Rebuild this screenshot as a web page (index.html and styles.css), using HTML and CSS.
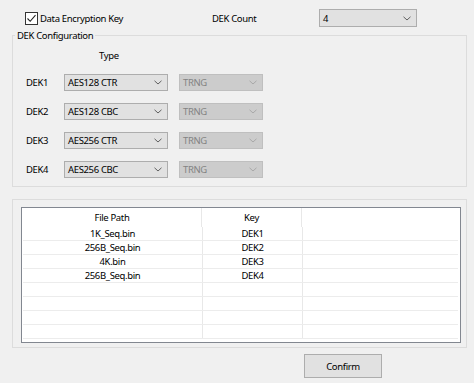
FILE: index.html
```html
<!DOCTYPE html>
<html lang="en">
  <head>
    <meta charset="UTF-8" />
    <title>DEK Configuration</title>
    <link rel="stylesheet" href="styles.css">
  </head>
  <body>
    <div class="dialog">
      <div class="top-row">
        <label class="check">
          <span class="check-box">
            <svg width="11" height="11" viewBox="0 0 11 11"><path d="M1.5 5.5 L4.2 8.3 L9.5 2.2" fill="none" stroke="#222" stroke-width="1.1"/></svg>
          </span>
          Data Encryption Key
        </label>
        <span class="count-label">DEK Count</span>
        <div class="combo count-combo">
          <span>4</span>
          <svg class="chevron" width="8" height="5" viewBox="0 0 8 5"><path d="M0.5 0.8 L4 4 L7.5 0.8" fill="none" stroke="#606060" stroke-width="1"/></svg>
        </div>
      </div>

      <fieldset class="group config-group">
        <legend>DEK Configuration</legend>
        <div class="type-head">Type</div>

        <div class="dek-row">
          <span class="dek-label">DEK1</span>
          <div class="combo type-combo">
            <span>AES128 CTR</span>
            <svg class="chevron" width="8" height="5" viewBox="0 0 8 5"><path d="M0.5 0.8 L4 4 L7.5 0.8" fill="none" stroke="#606060" stroke-width="1"/></svg>
          </div>
          <div class="combo rng-combo disabled">
            <span>TRNG</span>
            <svg class="chevron" width="8" height="5" viewBox="0 0 8 5"><path d="M0.5 0.8 L4 4 L7.5 0.8" fill="none" stroke="#a8a8a8" stroke-width="1"/></svg>
          </div>
        </div>

        <div class="dek-row">
          <span class="dek-label">DEK2</span>
          <div class="combo type-combo">
            <span>AES128 CBC</span>
            <svg class="chevron" width="8" height="5" viewBox="0 0 8 5"><path d="M0.5 0.8 L4 4 L7.5 0.8" fill="none" stroke="#606060" stroke-width="1"/></svg>
          </div>
          <div class="combo rng-combo disabled">
            <span>TRNG</span>
            <svg class="chevron" width="8" height="5" viewBox="0 0 8 5"><path d="M0.5 0.8 L4 4 L7.5 0.8" fill="none" stroke="#a8a8a8" stroke-width="1"/></svg>
          </div>
        </div>

        <div class="dek-row">
          <span class="dek-label">DEK3</span>
          <div class="combo type-combo">
            <span>AES256 CTR</span>
            <svg class="chevron" width="8" height="5" viewBox="0 0 8 5"><path d="M0.5 0.8 L4 4 L7.5 0.8" fill="none" stroke="#606060" stroke-width="1"/></svg>
          </div>
          <div class="combo rng-combo disabled">
            <span>TRNG</span>
            <svg class="chevron" width="8" height="5" viewBox="0 0 8 5"><path d="M0.5 0.8 L4 4 L7.5 0.8" fill="none" stroke="#a8a8a8" stroke-width="1"/></svg>
          </div>
        </div>

        <div class="dek-row">
          <span class="dek-label">DEK4</span>
          <div class="combo type-combo">
            <span>AES256 CBC</span>
            <svg class="chevron" width="8" height="5" viewBox="0 0 8 5"><path d="M0.5 0.8 L4 4 L7.5 0.8" fill="none" stroke="#606060" stroke-width="1"/></svg>
          </div>
          <div class="combo rng-combo disabled">
            <span>TRNG</span>
            <svg class="chevron" width="8" height="5" viewBox="0 0 8 5"><path d="M0.5 0.8 L4 4 L7.5 0.8" fill="none" stroke="#a8a8a8" stroke-width="1"/></svg>
          </div>
        </div>
      </fieldset>

      <div class="group list-group">
        <div class="list">
          <div class="list-row list-head">
            <div class="cell">File Path</div>
            <div class="cell">Key</div>
            <div class="cell"></div>
          </div>
          <div class="list-row">
            <div class="cell">1K_Seq.bin</div>
            <div class="cell">DEK1</div>
            <div class="cell"></div>
          </div>
          <div class="list-row">
            <div class="cell">256B_Seq.bin</div>
            <div class="cell">DEK2</div>
            <div class="cell"></div>
          </div>
          <div class="list-row">
            <div class="cell">4K.bin</div>
            <div class="cell">DEK3</div>
            <div class="cell"></div>
          </div>
          <div class="list-row">
            <div class="cell">256B_Seq.bin</div>
            <div class="cell">DEK4</div>
            <div class="cell"></div>
          </div>
          <div class="list-row"><div class="cell"></div><div class="cell"></div><div class="cell"></div></div>
          <div class="list-row"><div class="cell"></div><div class="cell"></div><div class="cell"></div></div>
          <div class="list-row"><div class="cell"></div><div class="cell"></div><div class="cell"></div></div>
          <div class="list-row"><div class="cell"></div><div class="cell"></div><div class="cell"></div></div>
        </div>
      </div>

      <div class="actions">
        <button class="confirm">Confirm</button>
      </div>
    </div>
  </body>
</html>
```

FILE: styles.css
```css
html,
body {
  margin: 0;
  padding: 0;
  background-color: #f0f0f0;
}

body {
  font-family: "Noto Sans", "Open Sans", sans-serif;
  font-size: 9.5px;
  letter-spacing: -0.35px;
  color: #000;
  width: 474px;
  height: 383px;
  overflow: hidden;
}

.dialog {
  width: 474px;
  height: 383px;
}

.top-row {
  display: flex;
  align-items: center;
  height: 18px;
  padding-top: 9px;
}

.check {
  display: flex;
  align-items: center;
  width: 187px;
  margin-left: 25px;
  line-height: 13px;
}

.check-box {
  display: flex;
  align-items: center;
  justify-content: center;
  width: 11px;
  height: 11px;
  border: 1px solid #333;
  background-color: #fff;
  margin-right: 2px;
}

.count-label {
  width: 107px;
  line-height: 13px;
}

.combo {
  display: flex;
  align-items: center;
  justify-content: space-between;
  box-sizing: border-box;
  height: 17px;
  padding: 0 5px 0 3px;
  background-color: #e1e1e1;
  border: 1px solid #adadad;
}

.combo.disabled {
  background-color: #cccccc;
  border-color: #bfbfbf;
  color: #838383;
}

.count-combo {
  width: 98px;
  height: 18px;
}

.chevron {
  display: block;
  flex-shrink: 0;
}

/* Group boxes */
.group {
  border: 1px solid #dcdcdc;
  margin: 0 7px 0 12px;
}

.config-group {
  margin-top: 2px;
  padding: 0 0 8px 0;
}

.config-group legend {
  margin-left: 2px;
  padding: 0 2px;
  line-height: 13px;
}

.type-head {
  margin: 7px 0 0 86px;
  line-height: 13px;
}

.dek-row {
  display: flex;
  align-items: center;
  margin-top: 12px;
}

.dek-row:first-of-type {
  margin-top: 8px;
}

.dek-label {
  width: 38px;
  margin-left: 13px;
}

.type-combo {
  width: 104px;
  margin-right: 11px;
}

.rng-combo {
  width: 84px;
}

/* List view */
.list-group {
  margin-top: 12px;
  padding: 7px 5px 4px 8px;
}

.list {
  height: 134px;
  border: 1px solid #828790;
  background-color: #fff;
  overflow: hidden;
}

.list-row {
  display: grid;
  grid-template-columns: 180px 100px 1fr;
  height: 13px;
  line-height: 13px;
  margin: 0 2px 0 1px;
  border-bottom: 1px solid #ececec;
}

.list-row .cell {
  text-align: center;
  border-right: 1px solid #e8e8e8;
}

.list-row .cell:last-child {
  border-right: none;
}

.list-head {
  height: 19px;
  line-height: 19px;
  border-bottom: none;
  margin-left: 0;
}

.list-head .cell:first-child {
  padding-left: 1px;
}

/* Buttons */
.actions {
  display: flex;
  padding: 6px 0 0 304px;
}

.confirm {
  width: 78px;
  height: 24px;
  font-family: inherit;
  font-size: 9.5px;
  letter-spacing: -0.35px;
  color: #000;
  background-color: #e1e1e1;
  border: 1px solid #adadad;
  border-radius: 0;
  padding: 0;
}
```
